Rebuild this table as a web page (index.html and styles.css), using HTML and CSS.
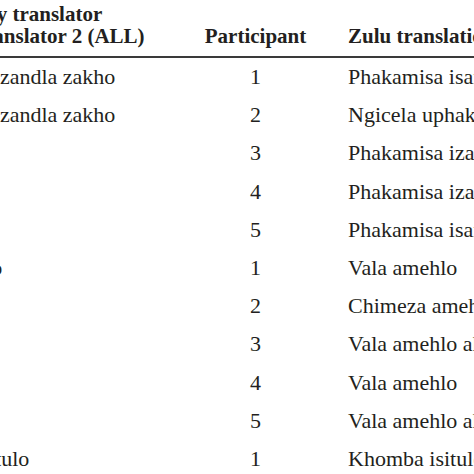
FILE: index.html
```html
<!DOCTYPE html>
<html>
<head>
<meta charset="utf-8">
<link rel="stylesheet" href="styles.css">
</head>
<body>
<div class="frame">
<table class="tbl">
  <colgroup>
    <col class="c1">
    <col class="c2">
    <col class="c3">
  </colgroup>
  <thead>
    <tr>
      <th class="h-first"><span class="l1">by translator</span><span class="l2">translator 2 (ALL)</span></th>
      <th class="h-mid">Participant</th>
      <th class="h-last">Zulu translation</th>
    </tr>
  </thead>
  <tbody>
    <tr><td>Phakamisa izandla zakho</td><td class="num">1</td><td class="zu">Phakamisa isandla sakho</td></tr>
    <tr><td>Phakamisa izandla zakho</td><td class="num">2</td><td class="zu">Ngicela uphakamise izandla</td></tr>
    <tr><td>Phakamisa</td><td class="num">3</td><td class="zu">Phakamisa izandla zakho</td></tr>
    <tr><td>Phakamisa</td><td class="num">4</td><td class="zu">Phakamisa izandla</td></tr>
    <tr><td>Phakamisa</td><td class="num">5</td><td class="zu">Phakamisa isandla</td></tr>
    <tr><td>Vala amehlo</td><td class="num">1</td><td class="zu">Vala amehlo</td></tr>
    <tr><td>Chimeza</td><td class="num">2</td><td class="zu">Chimeza amehlo</td></tr>
    <tr><td>Vala</td><td class="num">3</td><td class="zu">Vala amehlo akho</td></tr>
    <tr><td>Vala</td><td class="num">4</td><td class="zu">Vala amehlo</td></tr>
    <tr><td>Vala</td><td class="num">5</td><td class="zu">Vala amehlo akho</td></tr>
    <tr><td>Khomba isitulo</td><td class="num">1</td><td class="zu">Khomba isitulo</td></tr>
  </tbody>
</table>
</div>
</body>
</html>
```

FILE: styles.css
```css
html, body {
  margin: 0;
  padding: 0;
  background: #ffffff;
}
body {
  width: 474px;
  height: 474px;
  overflow: hidden;
}
.frame {
  margin-left: -107px;
}
.tbl {
  border-collapse: collapse;
  table-layout: fixed;
  width: 720px;
  font-family: "Liberation Serif", "Times New Roman", serif;
  color: #231f20;
}
.c1 { width: 302px; }
.c2 { width: 121px; }
.c3 { width: 297px; }
th {
  font-weight: bold;
  font-size: 21px;
  line-height: 22px;
  padding: 3px 0 9px 0;
  vertical-align: bottom;
  white-space: nowrap;
  border-bottom: 2px solid #3a3a3a;
}
.h-first {
  text-align: left;
}
.l1 {
  display: block;
  padding-left: 92px;
}
.l2 {
  display: block;
  padding-left: 84px;
}
.h-mid {
  text-align: center;
}
.h-last {
  text-align: left;
  padding-left: 32px;
}
td {
  font-size: 22px;
  line-height: 38.2px;
  padding: 0;
  white-space: nowrap;
  text-align: left;
  overflow: hidden;
}
td.num {
  text-align: center;
}
td.zu {
  padding-left: 32px;
}
```
